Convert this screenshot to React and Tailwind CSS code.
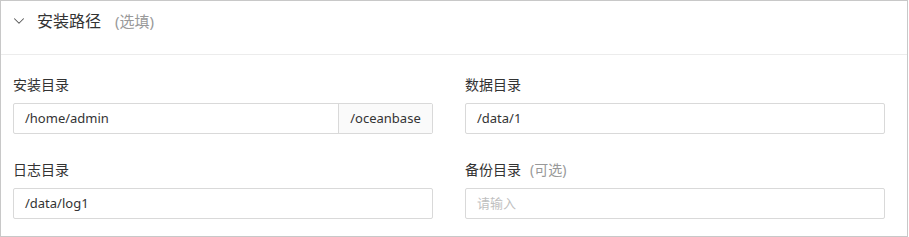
import { ChevronDown } from 'lucide-react';

const font = { fontFamily: '"Noto Sans", "Noto Sans CJK SC", sans-serif' };

function Field({ label, optional, value, placeholder, addon }) {
  return (
    <div>
      <div className="h-[25px] flex items-center text-[14px] text-[#333]">
        {label}
        {optional && <span className="ml-[9px] text-[#999]">(可选)</span>}
      </div>
      <div className="mt-[6px] flex h-[31px] w-[420px] border border-[#d9d9d9] rounded-[2px] text-[13px]">
        <div className={`flex-1 flex items-center px-[11px] ${value ? 'text-[#333]' : 'text-[#bfbfbf]'}`}>
          {value || placeholder}
        </div>
        {addon && (
          <div className="w-[94px] flex items-center justify-center border-l border-[#d9d9d9] bg-[#fafafa] text-[#333]">
            {addon}
          </div>
        )}
      </div>
    </div>
  );
}

export default function App() {
  return (
    <div style={font} className="w-[908px] h-[237px] border border-[#c8c8c8] bg-white">
      <div className="h-[54px] flex items-start pt-[7px] pl-[9px] border-b border-[#ececec]">
        <div className="h-[26px] flex items-center">
          <ChevronDown size={18} strokeWidth={1.4} className="text-[#555]" />
          <span className="ml-[9px] text-[16px] text-[#333]">安装路径</span>
          <span className="ml-[14px] text-[15px] text-[#999]">(选填)</span>
        </div>
      </div>
      <div className="pl-[12px] pt-[17px] grid grid-cols-[420px_420px] gap-x-[32px] gap-y-[23px]">
        <Field label="安装目录" value="/home/admin" addon="/oceanbase" />
        <Field label="数据目录" value="/data/1" />
        <Field label="日志目录" value="/data/log1" />
        <Field label="备份目录" optional placeholder="请输入" />
      </div>
    </div>
  );
}
